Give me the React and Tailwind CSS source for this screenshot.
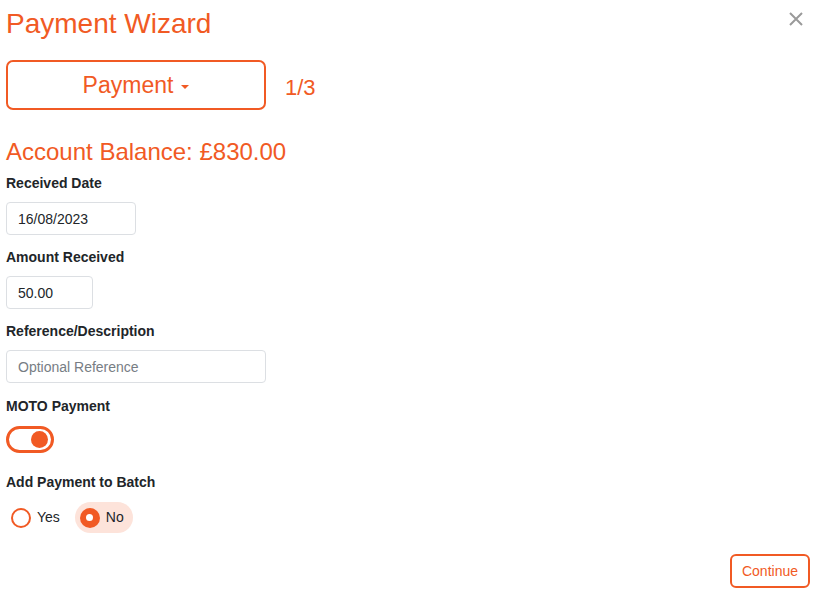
import React, { useState } from 'react';

const ORANGE = 'text-[#f15a24]';

const Field = ({ label, children, className = '', labelGap = 'mb-[10px]' }) => (
    <div className={`flex flex-col ${className}`}>
        <label className={`text-[14px] font-bold text-[#212529] leading-[17px] ${labelGap}`}>{label}</label>
        {children}
    </div>
);

const Radio = ({ checked, label, onClick }) => (
    <button
        onClick={onClick}
        className={`flex items-center gap-[6px] h-[31px] pl-[5px] pr-[9px] rounded-full ${checked ? 'bg-[#fde3da]' : ''}`}
    >
        {checked ? (
            <span className="w-[20px] h-[20px] rounded-full bg-[#f15a24] flex items-center justify-center">
                <span className="w-[7px] h-[7px] rounded-full bg-white" />
            </span>
        ) : (
            <span className="w-[20px] h-[20px] rounded-full border-2 border-[#f15a24]" />
        )}
        <span className="text-[14px] text-[#212529]">{label}</span>
    </button>
);

export default function App() {
    const [moto, setMoto] = useState(true);
    const [batch, setBatch] = useState('no');

    return (
        <div className="w-[818px] h-[593px] bg-white relative font-['Liberation_Sans',Arial,sans-serif] px-[6px]">
            {/* Header */}
            <div className="flex items-start justify-between pt-[6px]">
                <h1 className={`text-[28px] leading-[36px] ${ORANGE}`}>Payment Wizard</h1>
                <button className="mt-[2px] mr-[5px] text-[#9a9a9a]">
                    <svg width="22" height="22" viewBox="0 0 22 22" fill="none" stroke="currentColor" strokeWidth="2">
                        <path d="M5 5 L17 17 M17 5 L5 17" />
                    </svg>
                </button>
            </div>

            {/* Step selector */}
            <div className="flex items-center mt-[18px] gap-[19px]">
                <button className={`w-[260px] h-[50px] border-2 border-[#f15a24] rounded-[7px] flex items-center justify-center text-[23px] ${ORANGE}`}>
                    Payment
                    <span className="ml-[8px] mt-[3px] inline-block w-0 h-0 border-l-[4px] border-r-[4px] border-t-[4px] border-l-transparent border-r-transparent border-t-[#f15a24]" />
                </button>
                <span className={`text-[22px] mt-[4px] ${ORANGE}`}>1/3</span>
            </div>

            {/* Balance */}
            <div className={`text-[24px] leading-[28px] mt-[28px] ${ORANGE}`}>Account Balance: £830.00</div>

            <Field label="Received Date" className="mt-[9px]">
                <input
                    defaultValue="16/08/2023"
                    className="w-[130px] h-[33px] border border-[#dcdfe3] rounded-[4px] px-[11px] text-[14px] text-[#212529] outline-none"
                />
            </Field>
            <Field label="Amount Received" className="mt-[14px]">
                <input
                    defaultValue="50.00"
                    className="w-[87px] h-[33px] border border-[#dcdfe3] rounded-[4px] px-[11px] text-[14px] text-[#212529] outline-none"
                />
            </Field>
            <Field label="Reference/Description" className="mt-[14px]">
                <input
                    placeholder="Optional Reference"
                    className="w-[260px] h-[33px] border border-[#dcdfe3] rounded-[4px] px-[11px] text-[14px] text-[#212529] placeholder:text-[#777d84] outline-none"
                />
            </Field>
            <Field label="MOTO Payment" className="mt-[15px]" labelGap="mb-[11px]">
                <button
                    onClick={() => setMoto(!moto)}
                    className={`w-[48px] h-[27px] border-[3px] border-[#f15a24] rounded-full flex items-center px-[3px] ${moto ? 'justify-end' : 'justify-start'}`}
                >
                    <span className="w-[17px] h-[17px] rounded-full bg-[#f15a24]" />
                </button>
            </Field>
            <Field label="Add Payment to Batch" className="mt-[21px]" labelGap="mb-[11px]">
                <div className="flex items-center gap-[6px]">
                    <Radio checked={batch === 'yes'} label="Yes" onClick={() => setBatch('yes')} />
                    <Radio checked={batch === 'no'} label="No" onClick={() => setBatch('no')} />
                </div>
            </Field>

            {/* Footer */}
            <div className="flex justify-end mt-[21px] pr-[2px]">
                <button className={`w-[80px] h-[34px] border-2 border-[#f15a24] rounded-[6px] text-[14px] ${ORANGE}`}>
                    Continue
                </button>
            </div>
        </div>
    );
}
